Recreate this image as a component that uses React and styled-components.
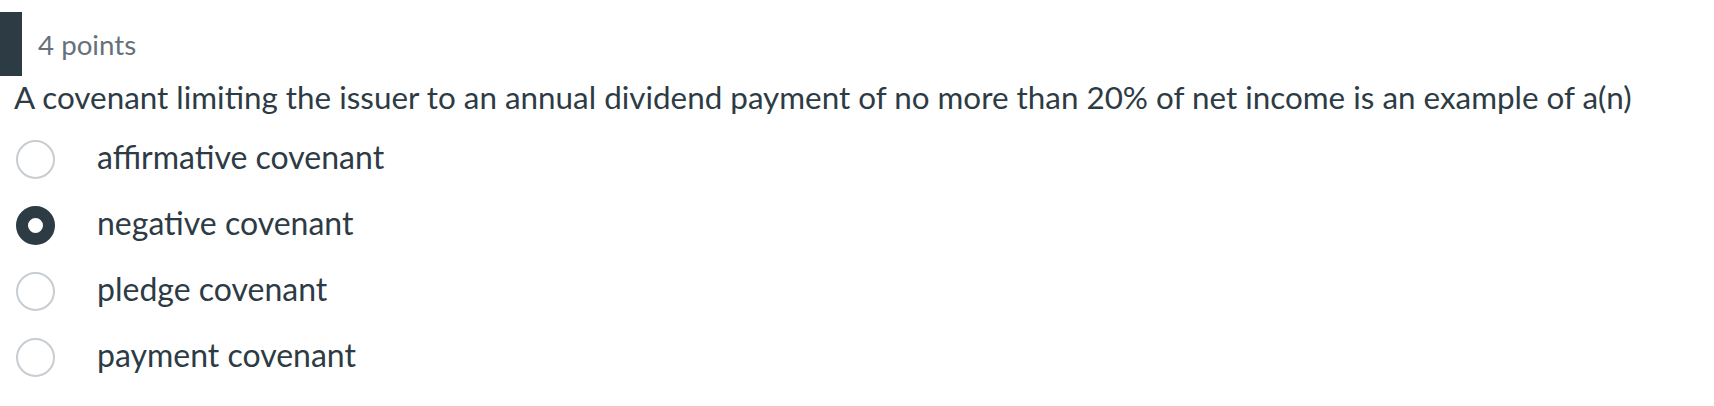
import React from 'react';
import styled, { createGlobalStyle } from 'styled-components';

const GlobalStyle = createGlobalStyle`
  body {
    margin: 0;
    background: #ffffff;
    font-family: Lato, "Open Sans", sans-serif;
    color: #2d3b45;
  }
`;

const Question = styled.div`
  padding-top: 12px;
`;

const Header = styled.div`
  display: flex;
  align-items: center;
  height: 64px;
  border-left: 22px solid #2d3b45;
  padding-left: 16px;
  font-size: 27.7px;
  color: #66717a;
`;

const Prompt = styled.p`
  margin: 0;
  padding: 0 14px;
  font-size: 31.4px;
  line-height: 42px;
`;

const Answers = styled.div`
  display: flex;
  flex-direction: column;
  padding-top: 8px;
`;

const Answer = styled.label`
  display: flex;
  align-items: center;
  height: 66px;
  padding-left: 16px;
  font-size: 32px;
  line-height: 40px;
  cursor: pointer;
`;

const AnswerText = styled.span`
  padding-bottom: 5px;
`;

const Radio = styled.span`
  box-sizing: border-box;
  width: 39px;
  height: 39px;
  border-radius: 50%;
  flex-shrink: 0;
  margin-right: 42px;
  border: ${p => (p.checked ? '12px solid #2d3b45' : '2px solid #c7cdd1')};
  background: #ffffff;
`;

const options = [
  'affirmative covenant',
  'negative covenant',
  'pledge covenant',
  'payment covenant',
];

const App = () => {
  return (
    <>
      <GlobalStyle />
      <Question>
        <Header>4 points</Header>
        <Prompt>
          A covenant limiting the issuer to an annual dividend payment of no more than 20% of net income is an example of a(n)
        </Prompt>
        <Answers>
          {options.map((o, i) => (
            <Answer key={o}>
              <Radio checked={i === 1} />
              <AnswerText>{o}</AnswerText>
            </Answer>
          ))}
        </Answers>
      </Question>
    </>
  );
};

export default App;
